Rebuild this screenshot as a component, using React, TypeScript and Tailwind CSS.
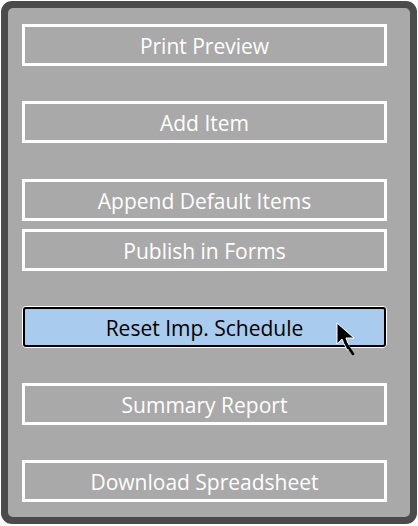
const items: { label: string; gapTop: string; active?: boolean }[] = [
  { label: "Print Preview", gapTop: "mt-0" },
  { label: "Add Item", gapTop: "mt-[35px]" },
  { label: "Append Default Items", gapTop: "mt-[36px]" },
  { label: "Publish in Forms", gapTop: "mt-[8px]" },
  { label: "Reset Imp. Schedule", gapTop: "mt-[35px]", active: true },
  { label: "Summary Report", gapTop: "mt-[35px]" },
  { label: "Download Spreadsheet", gapTop: "mt-[35px]" },
]

function Cursor() {
  return (
    <svg
      className="absolute left-[313px] top-[15px]"
      width="22"
      height="34"
      viewBox="0 0 22 34"
    >
      <path
        d="M1 1 L1 22 L6 17 L11 28 L14 27 L10 16 L18 16 Z"
        fill="#000"
        stroke="#fff"
        strokeWidth="1"
        strokeLinejoin="round"
      />
      <path d="M9 20 L17 32" stroke="#000" strokeWidth="2.5" strokeLinecap="round" />
    </svg>
  )
}

export default function App() {
  return (
    <div className="h-[526px] w-[418px] bg-white p-px font-['Open_Sans',sans-serif]">
      <div className="h-[523px] w-[416px] rounded-[11px] bg-[#4b4b4b] p-[7px]">
        <div className="flex h-full w-full flex-col rounded-[5px] bg-[#a9a9a9] pl-[14px] pr-[23px] pt-[16px]">
          {items.map((it) =>
            it.active ? (
              <div
                key={it.label}
                className={`${it.gapTop} relative h-[42px] rounded-[4px] border border-white`}
              >
                <div className="flex h-full items-center justify-center rounded-[3px] border-2 border-black bg-[#a9cbed] pt-[2px] text-[21px] leading-none text-black">
                  {it.label}
                </div>
                <Cursor />
              </div>
            ) : (
              <div
                key={it.label}
                className={`${it.gapTop} flex h-[42px] items-center justify-center border-[3px] border-white pt-[2px] text-[21px] leading-none text-white`}
              >
                {it.label}
              </div>
            )
          )}
        </div>
      </div>
    </div>
  )
}
